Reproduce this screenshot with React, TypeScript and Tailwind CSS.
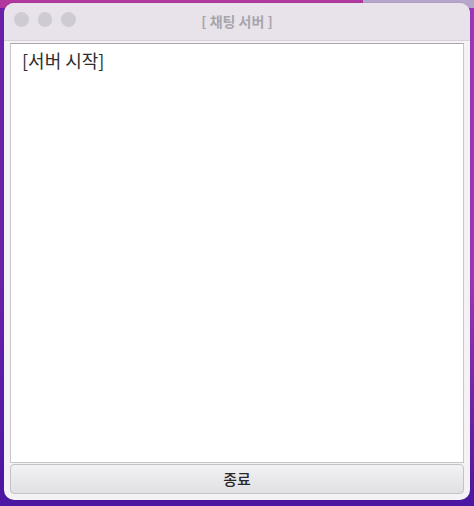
import React from "react";

export default function App() {
  return (
    <div
      className="relative w-[474px] h-[506px] overflow-hidden"
      style={{
        background:
          "linear-gradient(180deg, rgba(0,0,0,0) 0%, rgba(0,0,0,0) 55%, #4a16a2 100%), linear-gradient(90deg, #6a1faa 0%, #8a2ab0 50%, #9c36b8 100%)",
      }}
    >
      <div className="absolute left-0 top-0 w-[363px] h-[8px] bg-[#b0389e]" />
      <div className="absolute left-[363px] top-0 w-[111px] h-[8px] bg-[#b6a6cc]" />
      <div className="absolute left-[4px] top-[3px] w-[466px] h-[497px] rounded-[10px] bg-[#f4f2f5] flex flex-col overflow-hidden shadow-[0_0_1px_rgba(0,0,0,0.4)]">
        <div className="relative h-[38px] bg-[#e8e3ea] border-b border-[#d6d2d8] flex items-center justify-center">
          <div className="absolute left-[10px] top-[9px] flex gap-[9px]">
            <div className="w-[15px] h-[15px] rounded-full bg-[#cfcbd2]" />
            <div className="w-[14px] h-[15px] rounded-full bg-[#cfcbd2]" />
            <div className="w-[15px] h-[15px] rounded-full bg-[#cfcbd2]" />
          </div>
          <span
            className="text-[14px] font-bold text-[#a9a5ac]"
            style={{ fontFamily: '"Noto Sans CJK KR", "Noto Sans", sans-serif' }}
          >
            [ 채팅 서버 ]
          </span>
        </div>
        <div className="flex-1 flex flex-col px-[6px] pt-[2px] pb-[6px]">
          <div className="flex-1 bg-white border border-[#c9c7ca] border-t-[#a9a7aa] px-[11px] pt-[3px]">
            <span
              className="text-[18px] text-[#2e2e2e] leading-[26px]"
              style={{ fontFamily: '"Noto Sans CJK KR", "Noto Sans", sans-serif' }}
            >
              [서버 시작]
            </span>
          </div>
          <div className="h-[30px] mt-[1px] rounded-[4px] border border-[#c4c2c6] bg-gradient-to-b from-[#f2f1f3] to-[#e1e0e2] flex items-center justify-center">
            <span
              className="text-[15px] text-[#2a2a2a] font-medium"
              style={{ fontFamily: '"Noto Sans CJK KR", "Noto Sans", sans-serif' }}
            >
              종료
            </span>
          </div>
        </div>
      </div>
    </div>
  );
}
